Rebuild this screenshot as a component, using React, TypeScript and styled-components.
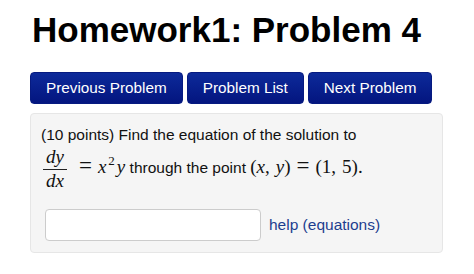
import styled, { createGlobalStyle } from "styled-components";

const GlobalStyle = createGlobalStyle`
  body {
    margin: 0;
    background: #ffffff;
    font-family: "Liberation Sans", Arial, sans-serif;
    color: #111;
  }
`;

const Page = styled.div`
  padding: 10px 0 0 30px;
`;

const Title = styled.h1`
  margin: 0 0 22px 2px;
  font-size: 35px;
  line-height: 40px;
  font-weight: bold;
  color: #000;
`;

const NavBar = styled.div`
  display: flex;
  gap: 4px;
  margin-bottom: 9px;
`;

const NavButton = styled.button`
  height: 32px;
  padding: 0 15px;
  border: 1px solid #061a80;
  border-radius: 4px;
  background: linear-gradient(#0d2a9a, #03157f);
  color: #fff;
  font-family: "Liberation Sans", Arial, sans-serif;
  font-size: 15.3px;
  cursor: pointer;
`;

const Well = styled.div`
  width: 413px;
  box-sizing: border-box;
  padding: 11px 10px 11px 10px;
  background: #f5f5f5;
  border: 1px solid #e6e6e6;
  border-radius: 4px;
`;

const ProblemText = styled.div`
  font-size: 15.5px;
  line-height: 20px;
  color: #111;
`;

const MathLine = styled.div`
  font-size: 15.5px;
  line-height: 20px;
  padding: 2px 0 19px;
  color: #111;
`;

const Frac = styled.span`
  display: inline-flex;
  flex-direction: column;
  align-items: center;
  vertical-align: 10px;
  margin: 0 6px 0 2px;
  font-family: "Liberation Serif", "Times New Roman", serif;
  font-style: italic;
  font-size: 19px;
  line-height: 19px;
`;

const Numerator = styled.span`
  padding: 0 3px 3px;
`;

const Denominator = styled.span`
  padding: 1px 3px 0;
`;

const FracBar = styled.span`
  align-self: stretch;
  height: 1px;
  background: #222;
`;

const M = styled.span<{ italic?: boolean }>`
  font-family: "Liberation Serif", "Times New Roman", serif;
  font-style: ${(p) => (p.italic ? "italic" : "normal")};
  font-size: 19px;
`;

const Rel = styled.span`
  font-family: "Liberation Serif", "Times New Roman", serif;
  font-size: 23px;
  margin: 0 6px;
`;

const Sup = styled.span`
  font-family: "Liberation Serif", "Times New Roman", serif;
  font-size: 13px;
  vertical-align: 8px;
  line-height: 0;
  margin: 0 2px 0 2px;
`;

const Comma = styled.span`
  font-family: "Liberation Serif", "Times New Roman", serif;
  font-size: 19px;
  margin-right: 6px;
`;

const AnswerRow = styled.div`
  display: flex;
  align-items: center;
  padding-left: 4px;
`;

const AnswerInput = styled.input`
  width: 216px;
  height: 32px;
  box-sizing: border-box;
  border: 1px solid #cccccc;
  border-radius: 4px;
  background: #fff;
  padding: 4px 6px;
  font-size: 15px;
`;

const HelpLink = styled.a`
  margin-left: 8px;
  color: #1d3d8f;
  font-size: 15.5px;
  text-decoration: none;
`;

const App = () => {
  return (
    <>
      <GlobalStyle />
      <Page>
        <Title>Homework1: Problem 4</Title>
        <NavBar>
          <NavButton>Previous Problem</NavButton>
          <NavButton>Problem List</NavButton>
          <NavButton>Next Problem</NavButton>
        </NavBar>
        <Well>
          <ProblemText>(10 points) Find the equation of the solution to</ProblemText>
          <MathLine>
            <Frac>
              <Numerator>dy</Numerator>
              <FracBar />
              <Denominator>dx</Denominator>
            </Frac>
            <Rel>=</Rel>
            <M italic>x</M>
            <Sup>2</Sup>
            <M italic>y</M> through the point{" "}
            <M>(</M>
            <M italic>x</M>
            <Comma>,</Comma>
            <M italic>y</M>
            <M>)</M>
            <Rel>=</Rel>
            <M>(1</M>
            <Comma>,</Comma>
            <M>5).</M>
          </MathLine>
          <AnswerRow>
            <AnswerInput type="text" />
            <HelpLink href="#">help (equations)</HelpLink>
          </AnswerRow>
        </Well>
      </Page>
    </>
  );
};

export default App;
